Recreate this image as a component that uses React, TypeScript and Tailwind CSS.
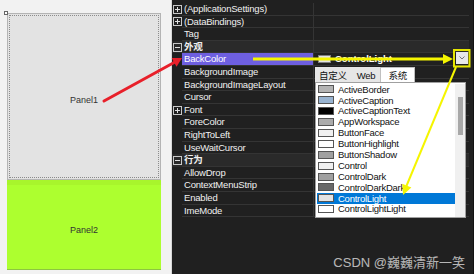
import React from "react";

type Row = { name: string; expand?: "plus" | "minus"; cat?: boolean; selected?: boolean };

const ROWS: Row[] = [
  { name: "(ApplicationSettings)", expand: "plus" },
  { name: "(DataBindings)", expand: "plus" },
  { name: "Tag" },
  { name: "外观", expand: "minus", cat: true },
  { name: "BackColor", selected: true },
  { name: "BackgroundImage" },
  { name: "BackgroundImageLayout" },
  { name: "Cursor" },
  { name: "Font", expand: "plus" },
  { name: "ForeColor" },
  { name: "RightToLeft" },
  { name: "UseWaitCursor" },
  { name: "行为", expand: "minus", cat: true },
  { name: "AllowDrop" },
  { name: "ContextMenuStrip" },
  { name: "Enabled" },
  { name: "ImeMode" },
];

const COLORS: { name: string; color: string }[] = [
  { name: "ActiveBorder", color: "#b4b4b4" },
  { name: "ActiveCaption", color: "#99b4d1" },
  { name: "ActiveCaptionText", color: "#000000" },
  { name: "AppWorkspace", color: "#ababab" },
  { name: "ButtonFace", color: "#f0f0f0" },
  { name: "ButtonHighlight", color: "#ffffff" },
  { name: "ButtonShadow", color: "#a0a0a0" },
  { name: "Control", color: "#f0f0f0" },
  { name: "ControlDark", color: "#a0a0a0" },
  { name: "ControlDarkDark", color: "#696969" },
  { name: "ControlLight", color: "#e3e3e3" },
  { name: "ControlLightLight", color: "#ffffff" },
];

function ExpandBox({ kind }: { kind: "plus" | "minus" }) {
  return (
    <svg width="9" height="9" viewBox="0 0 9 9">
      <rect x="0.5" y="0.5" width="8" height="8" fill="none" stroke="#c8c8c8" />
      <line x1="2" y1="4.5" x2="7" y2="4.5" stroke="#e0e0e0" />
      {kind === "plus" && <line x1="4.5" y1="2" x2="4.5" y2="7" stroke="#e0e0e0" />}
    </svg>
  );
}

function GridRow({ row }: { row: Row }) {
  return (
    <div className={"flex h-[12.6px] " + (row.cat ? "bg-[#2a2a2a]" : "")}>
      <div className="w-[10px] flex items-center justify-center shrink-0">
        {row.expand && <ExpandBox kind={row.expand} />}
      </div>
      <div
        className={
          "w-[131px] shrink-0 flex items-center pl-[2px] border-b border-[#343434] text-[9.5px] tracking-[-0.2px] leading-none " +
          (row.selected ? "bg-[#6e5fe0] text-white" : "text-[#f0f0f0]") +
          (row.cat ? " font-bold" : "")
        }
      >
        {row.name}
      </div>
      <div className="flex-1 flex items-center border-b border-l border-[#343434]">
        {row.selected && (
          <div className="flex items-center gap-[4px] pl-[4px]">
            <div className="w-[13px] h-[8px] bg-[#e3e3e3] border border-[#808080]" />
            <span className="text-[9.5px] font-bold text-white leading-none">ControlLight</span>
          </div>
        )}
      </div>
    </div>
  );
}

function ColorPopup() {
  return (
    <div className="absolute left-[315px] top-[67px] w-[151px] h-[151px] flex flex-col text-[9.5px] tracking-[-0.25px] leading-none">
      <div className="flex h-[15px]">
        <div className="flex items-end bg-[#e6e6e6] text-[#111] pb-[2px]">
          <span className="pl-[4px] pr-[5px]">自定义</span>
          <span className="px-[5px]">Web</span>
        </div>
        <div className="flex items-end bg-white px-[7px] pb-[2px] text-[#111] border-x border-t border-[#c0c0c0]">系统</div>
      </div>
      <div className="flex-1 flex bg-white border border-[#a0a0a0] pt-[1px] pl-[1px]">
        <div className="flex-1 flex flex-col">
          {COLORS.map((c) => (
            <div
              key={c.name}
              className={
                "h-[10.9px] flex items-center gap-[4px] pl-[1px] " +
                (c.name === "ControlLight" ? "bg-[#0078d7] text-white" : "text-[#111]")
              }
            >
              <div className="w-[16px] h-[8px] border border-[#555]" style={{ background: c.color }} />
              <span>{c.name}</span>
            </div>
          ))}
        </div>
        <div className="w-[10px] bg-[#f0f0f0] flex justify-center pt-[13px]">
          <div className="w-[5px] h-[38px] bg-[#a8a8a8]" />
        </div>
      </div>
    </div>
  );
}

function Arrows() {
  return (
    <svg className="absolute inset-0 pointer-events-none" width="474" height="274" viewBox="0 0 474 274">
      <line x1="104" y1="101" x2="175" y2="62" stroke="#e8202a" strokeWidth="3" strokeLinecap="round" />
      <polygon points="182,58 176.5,66.7 171.7,57.9" fill="#e8202a" />
      <line x1="253" y1="59" x2="444" y2="59" stroke="#f5f500" strokeWidth="3" />
      <polygon points="453,59 443,54 443,64" fill="#f5f500" />
      <rect x="454" y="50" width="15.5" height="16.5" fill="none" stroke="#e6e600" strokeWidth="2" />
      <line x1="456" y1="67" x2="406" y2="187" stroke="#f5f500" strokeWidth="2" />
      <polygon points="403,195 411.4,187.6 402.2,183.8" fill="#f5f500" />
    </svg>
  );
}

export default function App() {
  return (
    <div className="relative w-[474px] h-[274px] flex overflow-hidden font-['Liberation_Sans','Noto_Sans_CJK_SC',sans-serif]">
      {/* designer surface */}
      <div className="w-[172px] h-full bg-[#f2f2f2] border-r border-[#d8d8d8] pl-[7px] pt-[13px] relative">
        <div className="absolute left-[4px] top-[11px] w-[4px] h-[4px] border border-[#666] bg-white" />
        <div className="w-[154px] h-[167px] bg-[#e3e3e3] border border-[#b4b4b4] p-[1px] flex">
          <div className="flex-1 border border-dotted border-[#8c8c8c] flex items-center justify-center pt-[9px] text-[9px] text-[#333]">
            Panel1
          </div>
        </div>
        <div className="w-[154px] h-[90px] bg-[#adff2f] border-t-[5px] border-t-[#a8f52c] border-b border-b-[#8cc63f] flex items-center justify-center pt-[8px] text-[9px] text-[#333]">
          Panel2
        </div>
      </div>

      {/* property grid */}
      <div className="flex-1 h-full bg-[#202020] pt-[3px] pr-[4px] border-r border-[#111]">
        {ROWS.map((r) => (
          <GridRow key={r.name} row={r} />
        ))}
      </div>

      {/* dropdown button */}
      <div className="absolute left-[456px] top-[52px] w-[12px] h-[12px] bg-[#e8e8e8] flex items-center justify-center">
        <svg width="6" height="4" viewBox="0 0 6 4">
          <polyline points="0.5,0.5 3,3 5.5,0.5" fill="none" stroke="#777" />
        </svg>
      </div>

      <ColorPopup />
      <Arrows />

      <div className="absolute right-[9px] bottom-[5px] text-[13px] text-[#e0e0e0]/80 leading-none">
        CSDN @巍巍清新一笑
      </div>
    </div>
  );
}
